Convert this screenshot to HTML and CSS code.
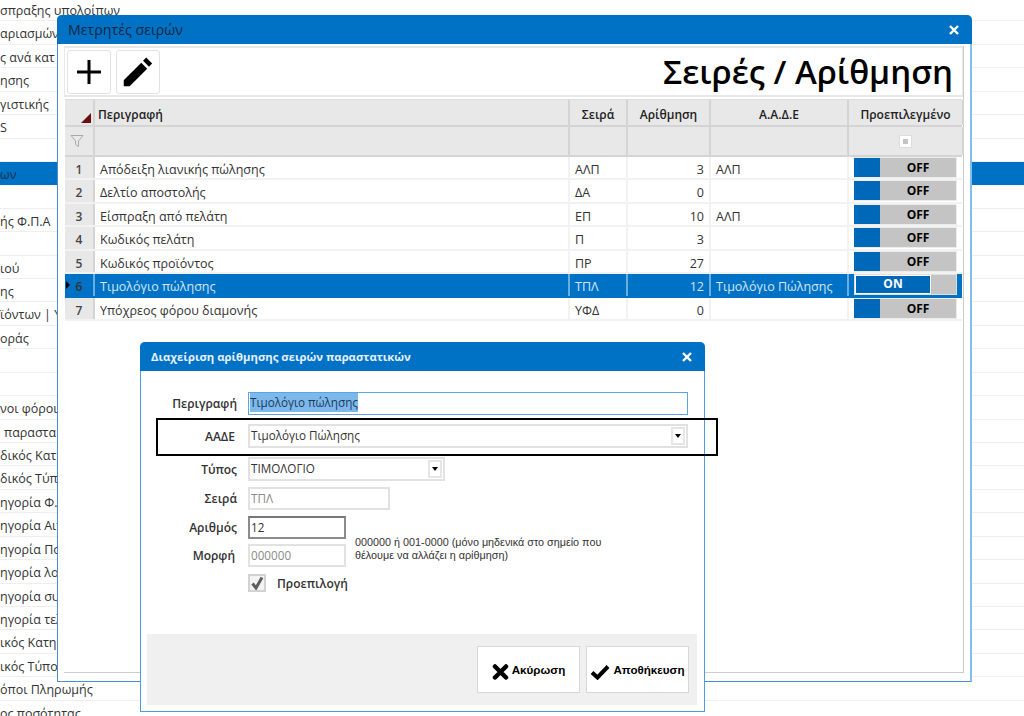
FILE: index.html
```html
<!DOCTYPE html>
<html lang="el">
<head>
  <meta charset="UTF-8">
  <title>Μετρητές σειρών</title>
  <link rel="stylesheet" href="styles.css">
</head>
<body>
  <!-- λίστα πίσω από τα παράθυρα -->
  <div class="back-list">
    <div class="back-row">σπραξης υπολοίπων</div>
    <div class="back-row">αριασμών</div>
    <div class="back-row">ς ανά κατ</div>
    <div class="back-row">ησης</div>
    <div class="back-row">γιστικής</div>
    <div class="back-row">S</div>
    <div class="back-row"></div>
    <div class="back-row selected">ων</div>
    <div class="back-row"></div>
    <div class="back-row">ής Φ.Π.Α</div>
    <div class="back-row"></div>
    <div class="back-row">ιού</div>
    <div class="back-row">ης</div>
    <div class="back-row">ϊόντων | Υ</div>
    <div class="back-row">οράς</div>
    <div class="back-row"></div>
    <div class="back-row"></div>
    <div class="back-row">νοι φόροι</div>
    <div class="back-row indent">παραστα</div>
    <div class="back-row">δικός Κατ</div>
    <div class="back-row">δικός Τύπ</div>
    <div class="back-row">ηγορία Φ.Π</div>
    <div class="back-row">ηγορία Αιτ</div>
    <div class="back-row">ηγορία Πο</div>
    <div class="back-row">ηγορία λο</div>
    <div class="back-row">ηγορία συ</div>
    <div class="back-row">ηγορία τελ</div>
    <div class="back-row">ικός Κατη</div>
    <div class="back-row">ικός Τύπο</div>
    <div class="back-row">όποι Πληρωμής</div>
    <div class="back-row">ος ποσότητας</div>
  </div>

  <!-- παράθυρο μετρητών -->
  <div class="window counters">
    <div class="titlebar">
      <span class="window-title">Μετρητές σειρών</span>
      <svg class="close" viewBox="0 0 10 10"><path d="M1 1L9 9M9 1L1 9"/></svg>
    </div>
    <div class="panel">
      <div class="toolbar">
        <button class="tool-button">
          <svg width="26" height="26" viewBox="0 0 26 26"><path d="M13 1V25M1 13H25" stroke="#000" stroke-width="3" fill="none"/></svg>
        </button>
        <button class="tool-button">
          <svg width="38" height="38" viewBox="0 0 24 24"><path d="M3 17.25V21h3.75L17.81 9.94l-3.75-3.75zM15.2 4.9l3.75 3.75 2-2-3.75-3.75z" fill="#000"/></svg>
        </button>
        <h1 class="page-title">Σειρές / Αρίθμηση</h1>
      </div>

      <div class="grid">
        <div class="grid-row head">
          <div class="cell num"><span class="corner"></span></div>
          <div class="cell">Περιγραφή</div>
          <div class="cell center">Σειρά</div>
          <div class="cell center">Αρίθμηση</div>
          <div class="cell center">Α.Α.Δ.Ε</div>
          <div class="cell center">Προεπιλεγμένο</div>
        </div>
        <div class="grid-row filter">
          <div class="cell num">
            <svg width="14" height="14" viewBox="0 0 14 14"><path d="M1 1.5H13L8.5 7V12.5L5.5 10.5V7Z" fill="none" stroke="#aaa"/></svg>
          </div>
          <div class="cell"></div>
          <div class="cell"></div>
          <div class="cell"></div>
          <div class="cell"></div>
          <div class="cell center"><span class="filter-check"></span></div>
        </div>
        <div class="grid-row">
          <div class="cell num">1</div><div class="cell">Απόδειξη λιανικής πώλησης</div><div class="cell">ΑΛΠ</div><div class="cell right">3</div><div class="cell">ΑΛΠ</div>
          <div class="cell toggle-cell"><div class="toggle off"><span class="knob"></span><span class="toggle-label">OFF</span></div></div>
        </div>
        <div class="grid-row">
          <div class="cell num">2</div><div class="cell">Δελτίο αποστολής</div><div class="cell">ΔΑ</div><div class="cell right">0</div><div class="cell"></div>
          <div class="cell toggle-cell"><div class="toggle off"><span class="knob"></span><span class="toggle-label">OFF</span></div></div>
        </div>
        <div class="grid-row">
          <div class="cell num">3</div><div class="cell">Είσπραξη από πελάτη</div><div class="cell">ΕΠ</div><div class="cell right">10</div><div class="cell">ΑΛΠ</div>
          <div class="cell toggle-cell"><div class="toggle off"><span class="knob"></span><span class="toggle-label">OFF</span></div></div>
        </div>
        <div class="grid-row">
          <div class="cell num">4</div><div class="cell">Κωδικός πελάτη</div><div class="cell">Π</div><div class="cell right">3</div><div class="cell"></div>
          <div class="cell toggle-cell"><div class="toggle off"><span class="knob"></span><span class="toggle-label">OFF</span></div></div>
        </div>
        <div class="grid-row">
          <div class="cell num">5</div><div class="cell">Κωδικός προϊόντος</div><div class="cell">ΠΡ</div><div class="cell right">27</div><div class="cell"></div>
          <div class="cell toggle-cell"><div class="toggle off"><span class="knob"></span><span class="toggle-label">OFF</span></div></div>
        </div>
        <div class="grid-row current">
          <div class="cell num"><span class="row-arrow"></span>6</div><div class="cell">Τιμολόγιο πώλησης</div><div class="cell">ΤΠΛ</div><div class="cell right">12</div><div class="cell">Τιμολόγιο Πώλησης</div>
          <div class="cell toggle-cell"><div class="toggle on"><span class="toggle-label">ON</span><span class="knob"></span></div></div>
        </div>
        <div class="grid-row">
          <div class="cell num">7</div><div class="cell">Υπόχρεος φόρου διαμονής</div><div class="cell">ΥΦΔ</div><div class="cell right">0</div><div class="cell"></div>
          <div class="cell toggle-cell"><div class="toggle off"><span class="knob"></span><span class="toggle-label">OFF</span></div></div>
        </div>
      </div>
    </div>
  </div>

  <!-- διάλογος αρίθμησης -->
  <div class="window dialog">
    <div class="titlebar small">
      <span class="dialog-title">Διαχείριση αρίθμησης σειρών παραστατικών</span>
      <svg class="close" viewBox="0 0 10 10"><path d="M1 1L9 9M9 1L1 9"/></svg>
    </div>
    <div class="form">
      <div class="field gap-9">
        <label class="field-label">Περιγραφή</label>
        <div class="input focused w-full"><span class="selected-text">Τιμολόγιο πώλησης</span></div>
      </div>
      <div class="field gap-9 tall">
        <label class="field-label inset">ΑΑΔΕ</label>
        <div class="input combo w-full">Τιμολόγιο Πώλησης<span class="drop"><span class="drop-arrow"></span></span></div>
      </div>
      <div class="field gap-6 tall">
        <label class="field-label">Τύπος</label>
        <div class="input combo w-type">ΤΙΜΟΛΟΓΙΟ<span class="drop"><span class="drop-arrow"></span></span></div>
      </div>
      <div class="field gap-6">
        <label class="field-label">Σειρά</label>
        <div class="input disabled w-seira">ΤΠΛ</div>
      </div>
      <div class="field gap-5">
        <label class="field-label">Αριθμός</label>
        <div class="input strong w-num">12</div>
        <p class="hint">000000 ή 001-0000 (μόνο μηδενικά στο σημείο που<br>θέλουμε να αλλάζει η αρίθμηση)</p>
      </div>
      <div class="field gap-7">
        <label class="field-label inset">Μορφή</label>
        <div class="input disabled w-num">000000</div>
      </div>
      <div class="field check-field">
        <span class="check-box">
          <svg width="14" height="14" viewBox="0 0 14 14"><path d="M2.5 7.5L6 12L12 1.5" fill="none" stroke="#5f5f5f" stroke-width="3"/></svg>
        </span>
        <span class="check-label">Προεπιλογή</span>
      </div>
    </div>
    <div class="dialog-footer">
      <button class="action-button">
        <svg width="17" height="16" viewBox="0 0 17 16"><path d="M3 2.5L14 13.5M14 2.5L3 13.5" stroke="#000" stroke-width="4.5" stroke-linecap="round"/></svg>
        <span class="action-text">Ακύρωση</span>
      </button>
      <button class="action-button">
        <svg width="20" height="16" viewBox="0 0 20 16"><path d="M2 8.5L7.5 13.5L18 2.5" fill="none" stroke="#000" stroke-width="4"/></svg>
        <span class="action-text">Αποθήκευση</span>
      </button>
    </div>
  </div>

  <!-- μαύρο πλαίσιο επισήμανσης -->
  <div class="highlight-box"></div>
</body>
</html>
```

FILE: styles.css
```css
html, body {
  margin: 0;
  height: 716px;
  overflow: hidden;
  background: #fff;
  font-family: "Open Sans", "Noto Sans", sans-serif;
  font-size: 12.5px;
  color: #333;
}

/* λίστα στο φόντο */
.back-list {
  display: grid;
  grid-auto-rows: 23.43px;
  margin-top: -2px;
}
.back-row {
  box-sizing: border-box;
  border-bottom: 1px solid #eee;
  line-height: 26px;
  white-space: nowrap;
}
.back-row.selected {
  background: #0072c6;
  color: #12304a;
  border-bottom: 0;
}
.back-row.indent {
  padding-left: 4px;
}

/* παράθυρα */
.window {
  position: absolute;
  box-sizing: border-box;
  background: #fff;
}
.counters {
  left: 57px;
  top: 15px;
  width: 915px;
  height: 667px;
  border: 1px solid #4a90d0;
  border-top: 0;
  border-right: 2px solid #84bcec;
  border-radius: 5px 5px 0 0;
}
.dialog {
  left: 140px;
  top: 342px;
  width: 565px;
  height: 370px;
  border: 1px solid #4a9de0;
  border-top: 0;
  border-radius: 5px 5px 0 0;
  display: flex;
  flex-direction: column;
}
.titlebar {
  height: 29px;
  margin: 0 -1px;
  padding: 0 13px 0 11px;
  background: #0072c6;
  border-radius: 5px 5px 0 0;
  display: flex;
  align-items: center;
  justify-content: space-between;
  flex: none;
}
.counters .titlebar {
  margin-right: -2px;
}
.window-title {
  font-size: 14.2px;
  color: #10263a;
}
.dialog-title {
  font-weight: bold;
  font-size: 11.3px;
  color: #e6f0fa;
}
.close {
  width: 10px;
  height: 10px;
  fill: none;
  stroke: #fff;
  stroke-width: 2.4;
}

.panel {
  box-sizing: border-box;
  height: 627px;
  margin: 2px 6px 0;
  border-right: 1px solid #ccc;
  border-bottom: 1px solid #ccc;
}
.toolbar {
  box-sizing: border-box;
  height: 51px;
  padding: 3px 9px 3px 2px;
  border: 1px solid #e8e8e8;
  border-width: 2px 1px;
  display: flex;
  align-items: center;
  gap: 5px;
}
.tool-button {
  width: 44px;
  height: 44px;
  padding: 0;
  background: #fff;
  border: 1px solid #e2e2e2;
  border-radius: 3px;
  display: flex;
  align-items: center;
  justify-content: center;
}
.page-title {
  margin: 0 0 0 auto;
  font-size: 33px;
  font-weight: 600;
  color: #000;
  white-space: nowrap;
}

/* πίνακας */
.grid {
  margin: 2px 1px 0;
  border-top: 1px solid #ddd;
}
.grid-row {
  display: grid;
  grid-template-columns: 30px 475px 58px 83px 138px 115px;
  height: 23.43px;
  box-sizing: border-box;
  border-bottom: 2px solid #f2f2f2;
  line-height: 25px;
}
.grid-row.head {
  height: 27px;
  background: #e8e8e8;
  border-bottom: 2px solid #d4d4d4;
  font-size: 12px;
  font-weight: 600;
  line-height: 30px;
  color: #222;
}
.grid-row.filter {
  height: 30px;
  background: #e8e8e8;
  border-bottom: 2px solid #d4d4d4;
}
.cell {
  box-sizing: border-box;
  padding: 0 5px;
  border-right: 2px solid #f2f2f2;
  white-space: nowrap;
  overflow: hidden;
}
.head .cell, .filter .cell {
  padding: 0 3px;
  border-right-color: #d4d4d4;
}
.center {
  text-align: center;
}
.right {
  text-align: right;
}
.num, .head .num, .filter .num {
  position: relative;
  padding: 0;
  background: #e8e8e8;
  border-right-color: #d4d4d4;
  text-align: center;
  font-size: 12px;
  font-weight: 600;
  color: #444;
}
.filter .num {
  display: flex;
  align-items: center;
  padding-left: 5px;
}
.corner {
  position: absolute;
  right: 2px;
  bottom: 2px;
  border-left: 10px solid transparent;
  border-bottom: 10px solid #6b1010;
}
.filter-check {
  display: inline-block;
  box-sizing: border-box;
  width: 11px;
  height: 11px;
  margin-top: 9px;
  background: #fff;
  border: 3px solid #fff;
  outline: 1px solid #ddd;
  box-shadow: inset 0 0 0 3px #c4c4c4;
  vertical-align: top;
}
.current {
  background: #0072c6;
  border-bottom-color: #0072c6;
  color: #d5e6f5;
}
.current .cell {
  border-right-color: #6aaee0;
}
.current .num {
  color: #333;
  background: #0072c6;
}
.row-arrow {
  position: absolute;
  left: 1px;
  top: 7px;
  border-left: 4px solid #000;
  border-top: 4px solid transparent;
  border-bottom: 4px solid transparent;
}

/* διακόπτες */
.toggle-cell {
  padding: 0 5px;
  border-right: 0;
}
.toggle {
  box-sizing: border-box;
  display: flex;
  width: 103px;
  height: 21px;
  background: #c4c4c4;
  font-size: 12px;
  font-weight: bold;
  color: #000;
  line-height: 19px;
}
.toggle.off {
  border: 1px solid #ececec;
  border-left: 0;
}
.toggle .knob {
  flex: none;
  background: #0068b8;
}
.off .knob {
  width: 26px;
}
.toggle-label {
  flex: 1;
  text-align: center;
}
.toggle.on {
  border: 1px solid #e0e0e0;
  background: #c4c4c4;
  color: #fff;
}
.on .toggle-label {
  box-sizing: border-box;
  flex: none;
  width: 76px;
  background: #0068b8;
  border: 1px solid #fff;
  line-height: 16px;
}
.on .knob {
  width: 25px;
  background: #c4c4c4;
}

/* φόρμα διαλόγου */
.form {
  flex: 1;
  padding-top: 21px;
}
.field {
  display: flex;
  align-items: center;
  height: 23px;
  font-size: 11.7px;
}
.field.tall {
  height: 24px;
}
.gap-9 { margin-bottom: 9px; }
.gap-7 { margin-bottom: 7px; }
.gap-6 { margin-bottom: 6px; }
.gap-5 { margin-bottom: 5px; }
.field-label {
  box-sizing: border-box;
  flex: none;
  width: 96px;
  margin-right: 11px;
  text-align: right;
  font-size: 12px;
  font-weight: 600;
  color: #333;
}
.field-label.inset {
  padding-right: 2px;
}
.input {
  box-sizing: border-box;
  position: relative;
  height: 100%;
  padding-left: 1px;
  border: 2px solid #e2e2e2;
  line-height: 19px;
  white-space: nowrap;
}
.w-full { width: 440px; }
.w-type { width: 197px; }
.w-seira { width: 142px; }
.w-num { width: 98px; }
.input.focused {
  border: 1.5px solid #5aa5e6;
}
.selected-text {
  display: inline-block;
  background: #7db8ea;
  color: #1b3a5c;
  line-height: 19px;
}
.input.disabled {
  color: #8a8a8a;
}
.input.strong {
  border-color: #8c8c8c;
  border-top-color: #777;
  color: #333;
}
.drop {
  position: absolute;
  right: 1px;
  top: 1px;
  bottom: 1px;
  width: 14px;
  box-sizing: border-box;
  border: 2px solid #e6e6e6;
  background: #fff;
  display: flex;
  align-items: center;
  justify-content: center;
}
.drop-arrow {
  border-top: 4px solid #000;
  border-left: 3px solid transparent;
  border-right: 3px solid transparent;
}
.hint {
  margin: 0 0 0 9px;
  width: 270px;
  height: 23px;
  font-family: "Liberation Sans", sans-serif;
  font-size: 10.8px;
  line-height: 12.5px;
  color: #333;
  transform: translateY(20px);
}
.check-field {
  height: 18px;
  padding-left: 107px;
}
.check-box {
  box-sizing: border-box;
  width: 18px;
  height: 18px;
  background: #f3f3f3;
  border: 2px solid #d2d2d2;
  display: flex;
  align-items: center;
  justify-content: center;
  flex: none;
}
.check-label {
  margin-left: 11px;
  font-size: 12px;
  font-weight: 600;
  color: #333;
}

.dialog-footer {
  flex: none;
  height: 71px;
  margin: 0 7px 6px 6px;
  padding: 12px 8px 0 0;
  box-sizing: border-box;
  background: #f0f0f0;
  display: flex;
  justify-content: flex-end;
  align-items: flex-start;
  gap: 6px;
}
.action-button {
  box-sizing: border-box;
  width: 103px;
  height: 47px;
  padding: 4px 0 0;
  background: #fff;
  border: 1px solid #d8d8d8;
  display: flex;
  align-items: center;
  justify-content: center;
  gap: 3px;
  font-family: "Liberation Sans", sans-serif;
  font-size: 11.6px;
  font-weight: bold;
  color: #000;
}
.action-text {
  margin-top: -4px;
}

/* πλαίσιο επισήμανσης */
.highlight-box {
  position: absolute;
  left: 156px;
  top: 418px;
  width: 562px;
  height: 38px;
  box-sizing: border-box;
  border: 2px solid #000;
}
```
